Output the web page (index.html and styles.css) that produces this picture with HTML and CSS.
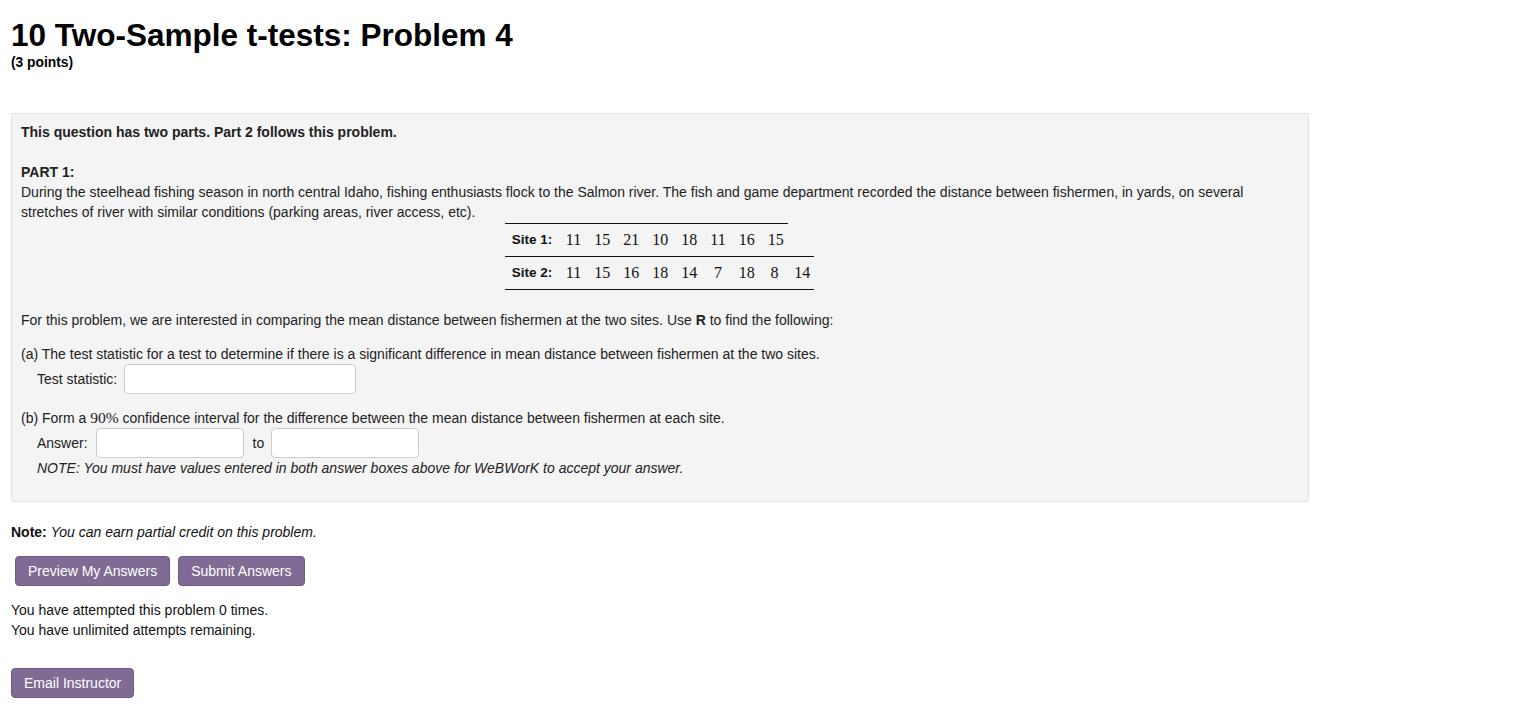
FILE: index.html
```html
<!DOCTYPE html>
<html>
<head>
<meta charset="utf-8">
<link rel="stylesheet" href="styles.css">
</head>
<body>
<div class="page">
  <h1 class="title">10 Two-Sample t-tests: Problem 4</h1>
  <div class="points">(3 points)</div>

  <div class="problem">
    <div class="intro">
      <div class="line"><b>This question has two parts. Part 2 follows this problem.</b></div>
      <div class="line">&nbsp;</div>
      <div class="line"><b>PART 1:</b></div>
      <div class="line">During the steelhead fishing season in north central Idaho, fishing enthusiasts flock to the Salmon river. The fish and game department recorded the distance between fishermen, in yards, on several stretches of river with similar conditions (parking areas, river access, etc).</div>
    </div>
    <div class="tablewrap">
      <table class="data">
        <tr>
          <td class="lab">Site 1:</td>
          <td>11</td><td>15</td><td>21</td><td>10</td><td>18</td><td>11</td><td>16</td><td class="last">15</td>
        </tr>
        <tr>
          <td class="lab">Site 2:</td>
          <td>11</td><td>15</td><td>16</td><td>18</td><td>14</td><td>7</td><td>18</td><td>8</td><td class="last">14</td>
        </tr>
      </table>
    </div>
    <p class="para first">For this problem, we are interested in comparing the mean distance between fishermen at the two sites. Use <b>R</b> to find the following:</p>
    <div class="para">
      <div class="line">(a) The test statistic for a test to determine if there is a significant difference in mean distance between fishermen at the two sites.</div>
      <div class="row"><span>Test statistic:</span><span class="input wide"></span></div>
    </div>
    <div class="para">
      <div class="line">(b) Form a <span class="math">90%</span> confidence interval for the difference between the mean distance between fishermen at each site.</div>
      <div class="row"><span>Answer:</span><span class="input"></span><span class="to">to</span><span class="input"></span></div>
      <div class="line indent"><i>NOTE: You must have values entered in both answer boxes above for WeBWorK to accept your answer.</i></div>
    </div>
  </div>

  <div class="note"><b>Note:</b> <i>You can earn partial credit on this problem.</i></div>
  <div class="buttons">
    <span class="btn">Preview My Answers</span>
    <span class="btn">Submit Answers</span>
  </div>
  <div class="attempts">
    <div class="line">You have attempted this problem 0 times.</div>
    <div class="line">You have unlimited attempts remaining.</div>
  </div>
  <div class="email"><span class="btn">Email Instructor</span></div>
</div>
</body>
</html>
```

FILE: styles.css
```css
html, body {
  margin: 0;
  padding: 0;
  background: #ffffff;
}
body {
  font-family: "Liberation Sans", Arial, sans-serif;
  font-size: 14px;
  line-height: 20px;
  color: #222222;
}
.page {
  padding: 10px 11px 0 11px;
}
.title {
  margin: 8px 0 0 0;
  font-size: 31.5px;
  line-height: 34px;
  font-weight: bold;
  color: #000000;
}
.points {
  font-weight: bold;
  font-size: 13.8px;
  line-height: 20px;
  margin-top: 1px;
  color: #000000;
}
.problem {
  margin-top: 40px;
  width: 1279px;
  background: #f4f4f4;
  border: 1px solid #e1e1e1;
  border-radius: 3px;
  padding: 8px 8px 9px 9px;
}
.line {
  line-height: 20px;
}
.tablewrap {
  display: flex;
  justify-content: center;
  padding-right: 2px;
}
.data {
  border-collapse: collapse;
  margin-top: 1px;
}
.data td {
  border-top: 1.5px solid #111;
  border-bottom: 1.5px solid #111;
  height: 32px;
  padding: 0 6.5px;
  text-align: center;
  font-family: "Liberation Serif", "Times New Roman", serif;
  font-size: 16px;
  color: #111;
}
.data td.last {
  padding-right: 4px;
}
.data td.lab {
  font-family: "Liberation Sans", Arial, sans-serif;
  font-weight: bold;
  font-size: 13.5px;
  padding: 0 7px 0 7px;
  text-align: left;
}
.para {
  margin: 0 0 14px 0;
}
.para.first {
  margin-top: 20px;
  margin-bottom: 14px;
}
.row {
  display: flex;
  align-items: center;
  height: 30px;
  padding-left: 16px;
}
.row span + span {
  margin-left: 8px;
}
.input {
  display: inline-block;
  width: 146px;
  height: 28px;
  background: #ffffff;
  border: 1px solid #cccccc;
  border-radius: 4px;
}
.row .input.wide {
  width: 230px;
  margin-left: 7px;
}
.row .to {
  margin-left: 9px;
}
.row .to + .input {
  margin-left: 7px;
}
.indent {
  padding-left: 16px;
}
.math {
  font-family: "Liberation Serif", "Times New Roman", serif;
  font-size: 15.5px;
}
.note {
  margin-top: 20px;
  color: #111;
}
.buttons {
  display: flex;
  gap: 8px;
  margin-top: 14px;
  padding-left: 4px;
}
.btn {
  display: inline-flex;
  align-items: center;
  height: 28px;
  padding: 0 12px;
  background: #7f6b94;
  border: 1px solid #6d5b82;
  border-radius: 4px;
  color: #ffffff;
  font-size: 14px;
}
.attempts {
  margin-top: 14px;
  color: #111;
}
.email {
  margin-top: 28px;
}
```
